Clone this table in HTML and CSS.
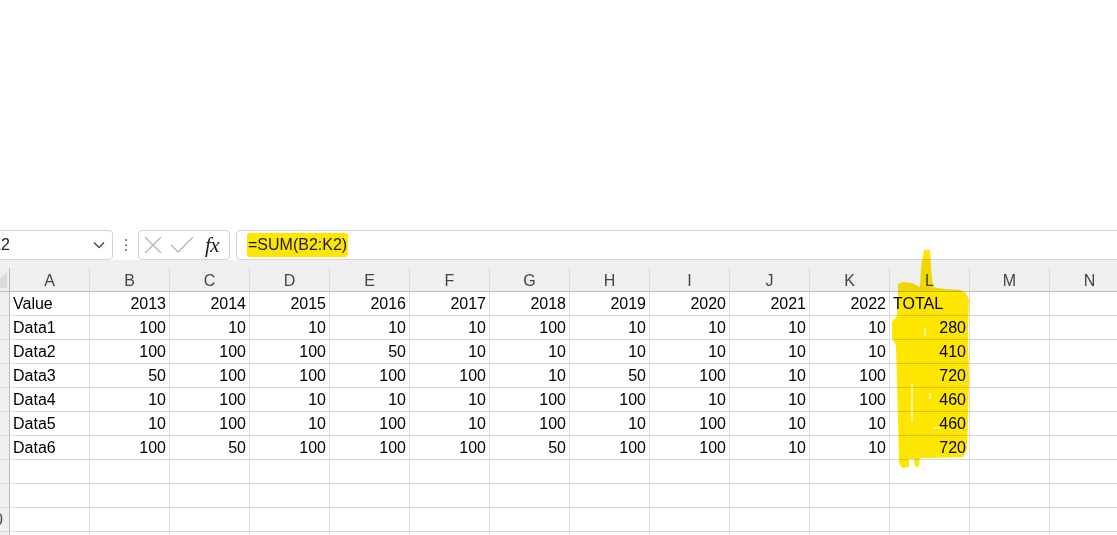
FILE: index.html
```html
<!DOCTYPE html>
<html>
<head>
<meta charset="utf-8">
<link rel="stylesheet" href="styles.css">
</head>
<body>
<div class="app">
  <div class="blank"></div>
  <div class="fbar">
    <div class="namebox">
      <span class="nb-text">L2</span>
      <svg class="chev" width="12" height="8" viewBox="0 0 12 8"><path d="M1 1.5 L6 6.5 L11 1.5" fill="none" stroke="#444" stroke-width="1.3"/></svg>
    </div>
    <div class="grip"><i></i><i></i><i></i></div>
    <div class="fxbox">
      <svg width="20" height="18" viewBox="0 0 20 18"><path d="M2 1 L18 17 M18 1 L2 17" fill="none" stroke="#b4b4b4" stroke-width="1.3"/></svg>
      <svg width="24" height="18" viewBox="0 0 24 18"><path d="M1 9 L8 16 L23 1" fill="none" stroke="#b4b4b4" stroke-width="1.3"/></svg>
      <span class="fx">fx</span>
    </div>
    <div class="formula"><span class="hl">=SUM(B2:K2)</span></div>
  </div>
  <div class="band"></div>
  <div class="sheet">
    <div class="rh corner"><div class="tri"></div></div>
    <div class="ch">A</div><div class="ch">B</div><div class="ch">C</div><div class="ch">D</div><div class="ch">E</div><div class="ch">F</div><div class="ch">G</div><div class="ch">H</div><div class="ch">I</div><div class="ch">J</div><div class="ch">K</div><div class="ch">L</div><div class="ch">M</div><div class="ch">N</div>

    <div class="rh">1</div><div class="c">Value</div><div class="c n">2013</div><div class="c n">2014</div><div class="c n">2015</div><div class="c n">2016</div><div class="c n">2017</div><div class="c n">2018</div><div class="c n">2019</div><div class="c n">2020</div><div class="c n">2021</div><div class="c n">2022</div><div class="c">TOTAL</div><div class="c"></div><div class="c"></div>

    <div class="rh">2</div><div class="c">Data1</div><div class="c n">100</div><div class="c n">10</div><div class="c n">10</div><div class="c n">10</div><div class="c n">10</div><div class="c n">100</div><div class="c n">10</div><div class="c n">10</div><div class="c n">10</div><div class="c n">10</div><div class="c n">280</div><div class="c"></div><div class="c"></div>

    <div class="rh">3</div><div class="c">Data2</div><div class="c n">100</div><div class="c n">100</div><div class="c n">100</div><div class="c n">50</div><div class="c n">10</div><div class="c n">10</div><div class="c n">10</div><div class="c n">10</div><div class="c n">10</div><div class="c n">10</div><div class="c n">410</div><div class="c"></div><div class="c"></div>

    <div class="rh">4</div><div class="c">Data3</div><div class="c n">50</div><div class="c n">100</div><div class="c n">100</div><div class="c n">100</div><div class="c n">100</div><div class="c n">10</div><div class="c n">50</div><div class="c n">100</div><div class="c n">10</div><div class="c n">100</div><div class="c n">720</div><div class="c"></div><div class="c"></div>

    <div class="rh">5</div><div class="c">Data4</div><div class="c n">10</div><div class="c n">100</div><div class="c n">10</div><div class="c n">10</div><div class="c n">10</div><div class="c n">100</div><div class="c n">100</div><div class="c n">10</div><div class="c n">10</div><div class="c n">100</div><div class="c n">460</div><div class="c"></div><div class="c"></div>

    <div class="rh">6</div><div class="c">Data5</div><div class="c n">10</div><div class="c n">100</div><div class="c n">10</div><div class="c n">100</div><div class="c n">10</div><div class="c n">100</div><div class="c n">10</div><div class="c n">100</div><div class="c n">10</div><div class="c n">10</div><div class="c n">460</div><div class="c"></div><div class="c"></div>

    <div class="rh">7</div><div class="c">Data6</div><div class="c n">100</div><div class="c n">50</div><div class="c n">100</div><div class="c n">100</div><div class="c n">100</div><div class="c n">50</div><div class="c n">100</div><div class="c n">100</div><div class="c n">10</div><div class="c n">10</div><div class="c n">720</div><div class="c"></div><div class="c"></div>

    <div class="rh">8</div><div class="c"></div><div class="c"></div><div class="c"></div><div class="c"></div><div class="c"></div><div class="c"></div><div class="c"></div><div class="c"></div><div class="c"></div><div class="c"></div><div class="c"></div><div class="c"></div><div class="c"></div><div class="c"></div>

    <div class="rh">9</div><div class="c"></div><div class="c"></div><div class="c"></div><div class="c"></div><div class="c"></div><div class="c"></div><div class="c"></div><div class="c"></div><div class="c"></div><div class="c"></div><div class="c"></div><div class="c"></div><div class="c"></div><div class="c"></div>

    <div class="rh">10</div><div class="c"></div><div class="c"></div><div class="c"></div><div class="c"></div><div class="c"></div><div class="c"></div><div class="c"></div><div class="c"></div><div class="c"></div><div class="c"></div><div class="c"></div><div class="c"></div><div class="c"></div><div class="c"></div>

    <div class="rh">11</div><div class="c"></div><div class="c"></div><div class="c"></div><div class="c"></div><div class="c"></div><div class="c"></div><div class="c"></div><div class="c"></div><div class="c"></div><div class="c"></div><div class="c"></div><div class="c"></div><div class="c"></div><div class="c"></div>
  </div>
  <svg class="marker" width="1117" height="535" viewBox="0 0 1117 535">
    <path d="M924 250 L930 250 L931 268 L933 287 L945 289 L960 290 L966 293 L969 300 L968 330 L969 380 L968 420 L967 450 L963 457 L925 458 L920 458 L919 466 L915 467 L914 459 L909 459 L909 467 L902 468 L899 462 L898 420 L897 380 L896 345 L892 338 L892 322 L897 316 L898 300 L898 284 L903 282 L912 283 L920 287 L921 268 Z" fill="#ffe600"/>
    <path d="M912 383 L912 422" stroke="#fffbd0" stroke-width="1.5"/>
    <path d="M930 393 L930 399" stroke="#fffbd0" stroke-width="1.5"/>
    <path d="M933 428 L940 428" stroke="#fffbd0" stroke-width="1.5"/>
    <path d="M925 328 L925 336" stroke="#fffbd0" stroke-width="1.5"/>
  </svg>
</div>
</body>
</html>
```

FILE: styles.css
```css
html, body {
  margin: 0;
  padding: 0;
  background: #ffffff;
  overflow: hidden;
  width: 1117px;
  height: 535px;
}

.app {
  position: relative;
  width: 1117px;
  height: 535px;
  overflow: hidden;
  font-family: "Liberation Sans", Arial, sans-serif;
  font-size: 16px;
  color: #000;
}

.blank {
  height: 229px;
  background: #ffffff;
}

.fbar {
  height: 31px;
  box-sizing: border-box;
  padding-top: 1px;
  display: flex;
  align-items: flex-start;
  background: #ffffff;
}

.namebox {
  margin-left: -30px;
  width: 143px;
  height: 30px;
  box-sizing: border-box;
  border: 1px solid #d3d3d3;
  border-radius: 4px;
  display: flex;
  align-items: center;
  padding-left: 21px;
  padding-right: 7px;
  color: #222;
}

.nb-text {
  flex: 1;
}

.chev {
  display: block;
}

.grip {
  width: 25px;
  height: 30px;
  display: flex;
  flex-direction: column;
  align-items: center;
  justify-content: center;
  gap: 3px;
}

.grip i {
  display: block;
  width: 2px;
  height: 2px;
  background: #8a8a8a;
}

.fxbox {
  width: 92px;
  height: 30px;
  box-sizing: border-box;
  border: 1px solid #d3d3d3;
  border-radius: 4px;
  display: flex;
  align-items: center;
  padding-left: 4px;
  gap: 7px;
}

.fxbox svg {
  display: block;
}

.fx {
  font-family: "Liberation Serif", "Times New Roman", serif;
  font-style: italic;
  font-size: 21px;
  color: #222;
  margin-left: 4px;
  letter-spacing: -0.5px;
}

.formula {
  flex: 1;
  margin-left: 6px;
  margin-right: -10px;
  height: 30px;
  box-sizing: border-box;
  border: 1px solid #d3d3d3;
  border-radius: 4px;
  display: flex;
  align-items: center;
  padding-left: 10px;
}

.hl {
  background: #ffe600;
  padding: 3px 1px;
  border-radius: 3px;
  color: #1a1a1a;
}

.band {
  height: 8px;
  background: #efefef;
}

.sheet {
  display: grid;
  grid-template-columns: 31px repeat(14, 80px);
  grid-auto-rows: 24px;
  margin-left: -21px;
}

.sheet > div {
  box-sizing: border-box;
}

.ch {
  background: #efefef;
  border-right: 1px solid #d9d9d9;
  border-bottom: 1px solid #bdbdbd;
  text-align: center;
  padding-top: 2px;
  line-height: 21px;
  color: #444;
}

.rh {
  background: #efefef;
  border-right: 1px solid #bdbdbd;
  border-bottom: 1px solid #d9d9d9;
  text-align: center;
  padding-top: 1px;
  line-height: 22px;
  color: #444;
}

.corner {
  border-bottom: 1px solid #bdbdbd;
  display: flex;
  justify-content: flex-end;
  align-items: flex-end;
  padding: 0 2px 3px 0;
}

.tri {
  width: 0;
  height: 0;
  border-left: 16px solid transparent;
  border-bottom: 16px solid #dadada;
}

.c {
  border-right: 1px solid #dadada;
  border-bottom: 1px solid #dadada;
  padding: 1px 3px 0;
  line-height: 22px;
  white-space: nowrap;
  overflow: hidden;
}

.n {
  text-align: right;
}

.marker {
  position: absolute;
  left: 0;
  top: 0;
  pointer-events: none;
  mix-blend-mode: multiply;
}
```
